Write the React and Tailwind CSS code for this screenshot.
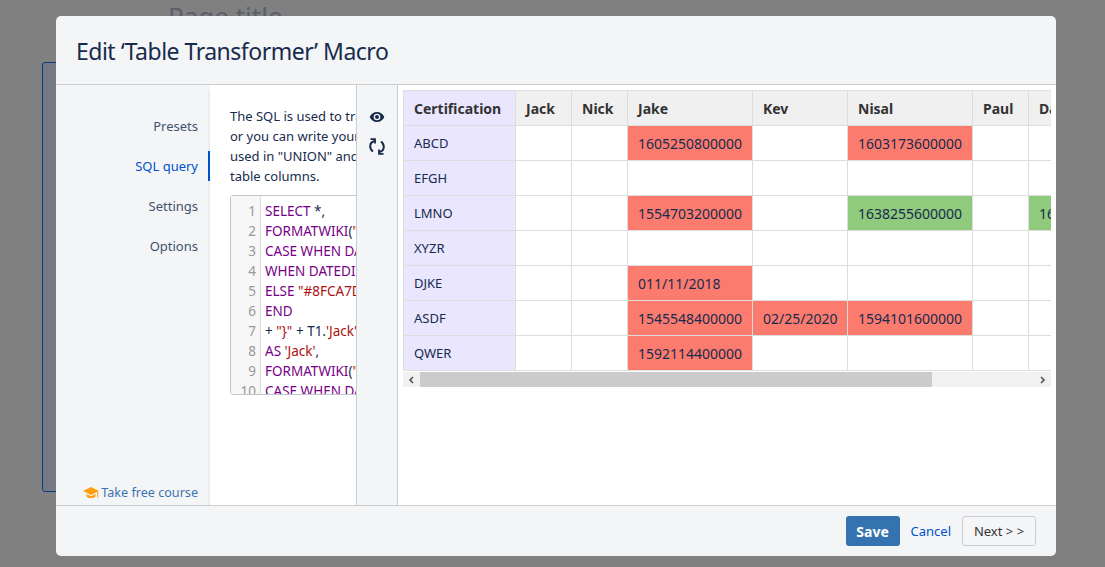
import React from "react";

const cols = [
  { name: "Certification", w: 112 },
  { name: "Jack", w: 56 },
  { name: "Nick", w: 56 },
  { name: "Jake", w: 125 },
  { name: "Kev", w: 95 },
  { name: "Nisal", w: 125 },
  { name: "Paul", w: 56 },
  { name: "Dave", w: 125 },
];
const R = "bg-[#fc7b6f]";
const G = "bg-[#8fca7d]";
const rows = [
  ["ABCD", {}, {}, { t: "1605250800000", c: R }, {}, { t: "1603173600000", c: R }, {}, {}],
  ["EFGH", {}, {}, {}, {}, {}, {}, {}],
  ["LMNO", {}, {}, { t: "1554703200000", c: R }, {}, { t: "1638255600000", c: G }, {}, { t: "1638255600000", c: G }],
  ["XYZR", {}, {}, {}, {}, {}, {}, {}],
  ["DJKE", {}, {}, { t: "011/11/2018", c: R }, {}, {}, {}, {}],
  ["ASDF", {}, {}, { t: "1545548400000", c: R }, { t: "02/25/2020", c: R }, { t: "1594101600000", c: R }, {}, {}],
  ["QWER", {}, {}, { t: "1592114400000", c: R }, {}, {}, {}, {}],
];

const P = ({ children }) => <span className="text-[#770088]">{children}</span>;
const S = ({ children }) => <span className="text-[#aa1111]">{children}</span>;
const code = [
  <><P>SELECT</P> *,</>,
  <><P>FORMATWIKI</P>(<S>"</S></>,
  <><P>CASE WHEN DATEDIFF</P></>,
  <><P>WHEN DATEDIFF</P></>,
  <><P>ELSE</P> <S>"#8FCA7D"</S></>,
  <><P>END</P></>,
  <>+ <S>"}"</S> + T1.<S>'Jack'</S></>,
  <><P>AS</P> <S>'Jack'</S>,</>,
  <><P>FORMATWIKI</P>(<S>"</S></>,
  <><P>CASE WHEN DATEDIFF</P></>,
];

function NavItem({ children, active }) {
  return (
    <div className={"h-[30px] mb-[10px] flex items-center justify-end pr-[10px] pt-[1px] text-[13px] border-r-2 " + (active ? "text-[#0052cc] border-[#0052cc]" : "text-[#42526e] border-transparent")}>
      {children}
    </div>
  );
}

export default function App() {
  return (
    <div className="relative h-[567px] w-[1105px] overflow-hidden bg-[#808080] font-['Noto_Sans','Open_Sans',sans-serif]">
      <div className="pl-[168px] pt-[1px] text-[26px] leading-[30px] text-[#5a5f69]">Page title</div>
      <div className="ml-[42px] mt-[31px] h-[430px] w-[200px] rounded-[3px] border border-[#0a3a85] bg-[#757a82]"></div>

      <div className="absolute left-[56px] top-[16px] flex h-[540px] w-[1000px] flex-col overflow-hidden rounded-[5px] bg-[#f4f5f7]">
        <header className="flex h-[69px] shrink-0 items-center border-b border-[#cccccc] pl-[20px] pt-[2px]">
          <h1 className="text-[23px] leading-[30px] tracking-[-0.5px] text-[#172b4d]">Edit ‘Table Transformer’ Macro</h1>
        </header>

        <div className="flex min-h-0 flex-1">
          <aside className="relative flex w-[154px] shrink-0 flex-col justify-between pt-[26px] pb-[2px] text-right">
            <div className="absolute right-0 top-[5px] bottom-0 w-[2px] bg-[#ebecf0]"></div>
            <nav className="relative">
              <NavItem>Presets</NavItem>
              <NavItem active>SQL query</NavItem>
              <NavItem>Settings</NavItem>
              <NavItem>Options</NavItem>
            </nav>
            <a className="relative flex items-center justify-end gap-[2px] pr-[12px] text-[12.6px] leading-[20px] text-[#3b73af]">
              <svg width="16" height="14" viewBox="0 0 16 14" fill="#ff9f0f" aria-hidden="true">
                <path d="M8 1 16 5 8 9 0 5Z" />
                <path d="M3.5 8v2.5C5 12.5 11 12.5 12.5 10.5V8L8 10.2Z" />
                <rect x="14.2" y="6" width="1" height="5.5" />
              </svg>
              Take free course
            </a>
          </aside>

          <main className="w-[146px] shrink-0 overflow-hidden bg-white pl-[20px] pt-[21px]">
            <div className="w-[420px] text-[13px] leading-[20px] text-[#172b4d]">
              <p>The SQL is used to transform the tables,</p>
              <p>or you can write your own queries, it is</p>
              <p>used in "UNION" and other operations on</p>
              <p>table columns.</p>
            </div>
            <div className="mt-[9px] flex h-[200px] w-[300px] overflow-hidden rounded-[3px] border border-[#c1c7d0] text-[13.5px] leading-[20px]">
              <div className="w-[30px] shrink-0 border-r border-[#dddddd] bg-[#f7f7f7] pt-[5px] pr-[4px] text-right text-[#999999]">
                {code.map((_, i) => (
                  <div key={i}>{i + 1}</div>
                ))}
              </div>
              <div className="whitespace-nowrap pt-[5px] pl-[4px] text-[#172b4d]">
                {code.map((c, i) => (
                  <div key={i}>{c}</div>
                ))}
              </div>
            </div>
          </main>

          <div className="flex w-[42px] shrink-0 flex-col items-center border-x border-[#c9ccd1] bg-[#f4f5f7] pt-[24px] pr-[1px] text-[#172b4d]">
            <svg width="16" height="16" viewBox="0 0 24 24" fill="#172b4d" aria-hidden="true">
              <path fillRule="evenodd" d="M12 4.5C7 4.500 2.700 7.600 1 12c1.700 4.400 6 7.500 11 7.500s9.300-3.100 11-7.500c-1.700-4.400-6-7.500-11-7.500ZM12 17a5 5 0 1 1 0-10 5 5 0 0 1 0 10Zm0-8a3 3 0 1 0 0 6 3 3 0 0 0 0-6Z" />
            </svg>
            <svg className="mt-[13px]" width="16" height="17" viewBox="0 0 16 17" fill="none" stroke="#172b4d" strokeWidth="2" aria-hidden="true">
              <path d="M6 3C2.800 3.500 1.200 5.800 1.200 8.300c0 2.200 1.200 4 2.800 5.200" />
              <path d="M10 14c3.200-.5 4.800-2.800 4.800-5.300 0-2.200-1.200-4-2.800-5.200" />
              <path d="M1.500 1.200H6V5.500" strokeWidth="1.800" />
              <path d="M14.500 15.800H10V11.500" strokeWidth="1.800" />
            </svg>
          </div>

          <section className="flex-1 bg-white pl-[5px] pt-[5px]">
            <div className="w-[648px] overflow-hidden">
              <table className="w-[750px] table-fixed border-collapse text-[14px] text-[#172b4d]">
                <colgroup>
                  {cols.map((c) => (
                    <col key={c.name} style={{ width: c.w }} />
                  ))}
                </colgroup>
                <thead>
                  <tr className="h-[35px]">
                    {cols.map((c, i) => (
                      <th key={c.name} className={"border border-[#dddddd] px-[10px] pt-[1px] text-left text-[14px] font-bold text-[#333333] " + (i === 0 ? "bg-[#e9e6fe]" : "bg-[#f0f0f0]")}>
                        {c.name}
                      </th>
                    ))}
                  </tr>
                </thead>
                <tbody>
                  {rows.map((r) => (
                    <tr key={r[0]} className="h-[35px]">
                      <td className="border border-[#dddddd] bg-[#e9e6fe] px-[10px] pt-[2px] text-[13px]">{r[0]}</td>
                      {r.slice(1).map((c, i) => (
                        <td key={i} className={"overflow-hidden whitespace-nowrap border border-[#dddddd] px-[10px] " + (c.c || "bg-white")}>
                          {c.t}
                        </td>
                      ))}
                    </tr>
                  ))}
                </tbody>
              </table>
              <div className="mt-[1px] flex h-[15px] w-[648px] items-stretch bg-[#f1f1f1]">
                <div className="flex w-[17px] shrink-0 items-center justify-center">
                  <svg width="7" height="8" viewBox="0 0 7 8" fill="none" stroke="#505050" strokeWidth="1.600" aria-hidden="true"><path d="M5 1 2 4l3 3" /></svg>
                </div>
                <div className="w-[512px] bg-[#cbcbcb]"></div>
                <div className="flex-1"></div>
                <div className="flex w-[17px] shrink-0 items-center justify-center">
                  <svg width="7" height="8" viewBox="0 0 7 8" fill="none" stroke="#505050" strokeWidth="1.600" aria-hidden="true"><path d="m2 1 3 3-3 3" /></svg>
                </div>
              </div>
            </div>
          </section>
        </div>

        <footer className="flex h-[51px] shrink-0 items-center justify-end border-t border-[#cccccc] pr-[20px]">
          <button className="h-[30px] w-[54px] rounded-[3px] bg-[#3572b0] text-[14px] font-bold text-white">Save</button>
          <a className="ml-[11px] pt-[2px] text-[13px] text-[#0052cc]">Cancel</a>
          <button className="ml-[11px] h-[30px] w-[74px] rounded-[3px] border border-[#cccccc] bg-[#f4f5f7] pt-[2px] text-[13px] text-[#333333]">Next &gt; &gt;</button>
        </footer>
      </div>
    </div>
  );
}
